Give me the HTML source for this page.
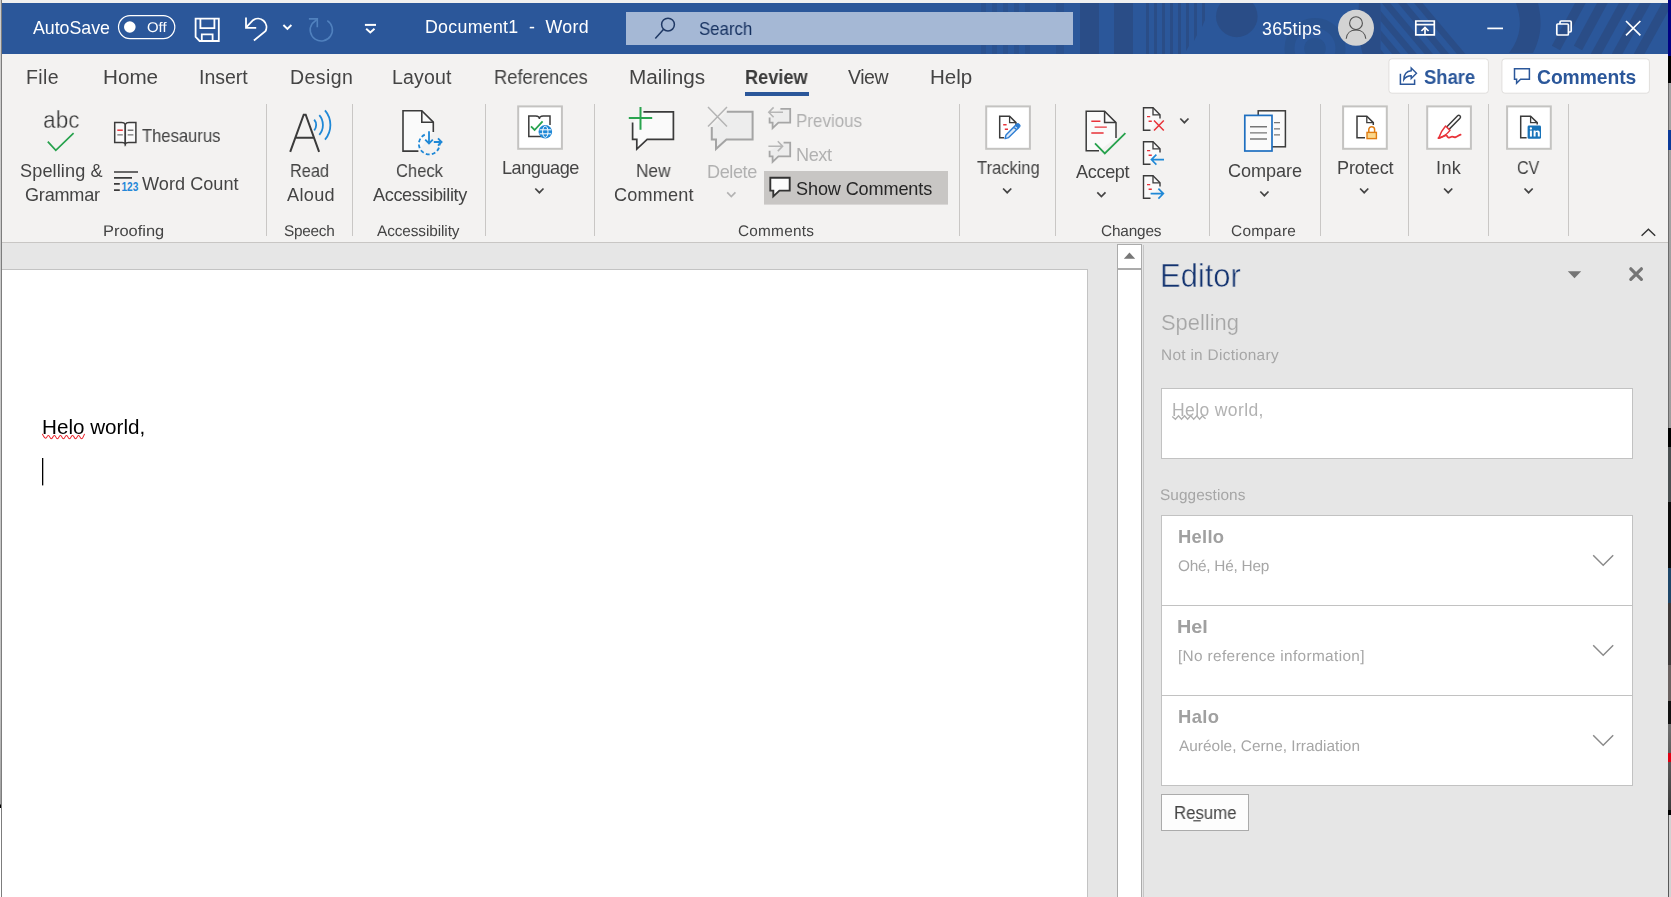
<!DOCTYPE html>
<html><head><meta charset="utf-8"><title>Document1 - Word</title><style>
html,body{margin:0;padding:0;width:1671px;height:897px;overflow:hidden;background:#f0f0f0;}
body{position:relative;font-family:"Liberation Sans",sans-serif;}
.a{position:absolute;}
.t{position:absolute;white-space:pre;line-height:40px;transform-origin:0 0;will-change:transform;font-family:"Liberation Sans",sans-serif;}
#ov{position:absolute;left:0;top:0;width:1671px;height:897px;}
</style></head>
<body>

<div class="a" style="left:0;top:0;width:1671px;height:3px;background:#f0f0f0"></div>
<div class="a" style="left:2px;top:3px;width:1666px;height:51px;background:#2b579a"></div>
<div class="a" style="left:2px;top:54px;width:1666px;height:188px;background:#f3f2f1"></div>
<div class="a" style="left:2px;top:242px;width:1666px;height:1px;background:#c8c6c4"></div>
<div class="a" style="left:2px;top:243px;width:1666px;height:654px;background:#e6e6e6"></div>
<!-- page -->
<div class="a" style="left:2px;top:269px;width:1085px;height:628px;background:#fff;border-top:1px solid #c3c3c3;border-right:1px solid #c3c3c3"></div>
<!-- scrollbar -->
<div class="a" style="left:1117px;top:244px;width:23px;height:653px;background:#fff;border:1px solid #ababab;border-bottom:none"></div>
<div class="a" style="left:1117px;top:268px;width:25px;height:2px;background:#ababab"></div>
<div class="a" style="left:1143px;top:245px;width:1px;height:652px;background:#c6c6c6"></div>
<!-- pane boxes -->
<div class="a" style="left:1161px;top:388px;width:470px;height:69px;background:#fff;border:1px solid #c2c2c2"></div>
<div class="a" style="left:1161px;top:515px;width:470px;height:269px;background:#fff;border:1px solid #c2c2c2"></div>
<div class="a" style="left:1162px;top:605px;width:470px;height:1px;background:#c2c2c2"></div>
<div class="a" style="left:1162px;top:695px;width:470px;height:1px;background:#c2c2c2"></div>
<div class="a" style="left:1161px;top:794px;width:86px;height:35px;background:#fdfdfd;border:1px solid #ababab"></div>
<!-- window edges -->
<div class="a" style="left:0;top:0;width:1px;height:897px;background:linear-gradient(to bottom,#cdcdcd 0,#c4c4c4 700px,#a0a0a0 804px,#000 805px,#000 808px,#fff 808px)"></div>
<div class="a" style="left:1px;top:0;width:1px;height:897px;background:#7d7d7d"></div>
<div class="a" style="left:1668px;top:0;width:3px;height:897px;background:linear-gradient(to bottom,#000082 0,#000082 56px,#000 56px,#000 83px,#a3a3a3 83px,#a3a3a3 130px,#0b3a99 130px,#0b3a99 150px,#a3a3a3 150px,#9c9c9c 428px,#000 428px,#000 447px,#4a4f50 447px,#4a4f50 502px,#0c0c0c 502px,#0c0c0c 568px,#1e4668 568px,#1e4668 603px,#3e3a3a 603px,#3e3a3a 665px,#6a6260 665px,#6a6260 701px,#111 701px,#111 724px,#707070 724px,#3c3c3c 810px,#000 810px,#000 815px,#d2d2d2 815px)"></div>
<div class="a" style="left:1668px;top:83px;width:1px;height:47px;background:#6c6c6c"></div>
<div class="a" style="left:1668px;top:150px;width:1px;height:278px;background:#6c6c6c"></div>
<div class="a" style="left:1668px;top:815px;width:1px;height:82px;background:#585858"></div>
<div class="a" style="left:1668px;top:753px;width:3px;height:9px;background:#e00012"></div>

<svg id="ov" width="1671" height="897" viewBox="0 0 1671 897">
<defs><clipPath id="tbclip"><rect x="2" y="3" width="1666" height="51"/></clipPath>
<clipPath id="tbclipR"><rect x="1380.5" y="3" width="120" height="51"/></clipPath></defs>

<!-- title bar decorations -->
<g fill="#2a4d87">
 <rect x="1080" y="3" width="19" height="51"/>
 <rect x="1114" y="3" width="19" height="51"/>
 <rect x="1146" y="3" width="3" height="51"/>
 <rect x="1154" y="3" width="3" height="51"/>
 <rect x="1162" y="3" width="3" height="51"/>
 <rect x="1170" y="3" width="3" height="51"/>
 <rect x="1178" y="3" width="3" height="51"/>
 <path d="M1186,3h3v43l-3,5z"/>
 <path d="M1194,3h3v32l-3,6z"/>
 <path d="M1202,3h3v17l-3,7z"/>
 <rect x="981" y="3" width="5" height="51" opacity=".55"/>
 <rect x="992" y="3" width="5" height="51" opacity=".55"/>
 <rect x="1003" y="3" width="5" height="51" opacity=".55"/>
 <rect x="1014" y="3" width="5" height="51" opacity=".55"/>
 <rect x="1025" y="3" width="5" height="51" opacity=".55"/>
 <rect x="1056" y="3" width="8" height="51" opacity=".55"/>
</g>
<g clip-path="url(#tbclip)">
 <circle cx="1236.8" cy="16.4" r="20.8" fill="#2a4d87"/>
 <circle cx="1315" cy="48.5" r="25.5" fill="none" stroke="#29528f" stroke-width="10"/>
 <circle cx="1315" cy="48.5" r="10.8" fill="#29528f"/>
 <path d="M1359,3C1357.6,20 1358.6,38 1362.6,54H1380.5V3Z" fill="#2a4d87"/>
 <g fill="#2a4d87" clip-path="url(#tbclipR)">
  <path d="M1333.1,3h8.4l43.7,52h-8.4z"/>
  <path d="M1349.3,3h8.4l43.7,52h-8.4z"/>
  <path d="M1365.5,3h8.4l43.7,52h-8.4z"/>
  <path d="M1381.7,3h8.4l43.7,52h-8.4z"/>
  <path d="M1397.9,3h8.4l43.7,52h-8.4z"/>
  <path d="M1414.1,3h8.4l43.7,52h-8.4z"/>
 </g>
 <path d="M1516,3 C1522,20 1522,36 1509,53 L1533,53 C1542,36 1542,20 1538,3 Z" fill="#2a4d87"/>
 <g stroke="#2a4d87" stroke-width="9.4" stroke-linecap="butt">
  <line x1="1582" y1="0" x2="1556" y2="48"/>
  <line x1="1604" y1="0" x2="1578" y2="48"/>
  <line x1="1626" y1="0" x2="1595" y2="56"/>
  <line x1="1647" y1="0" x2="1616" y2="56"/>
  <line x1="1669" y1="0" x2="1638" y2="56"/>
 </g>
</g>
<!-- search box -->
<rect x="626" y="12" width="447" height="33" fill="#a5b8d5"/>
<g fill="none" stroke="#1f3864" stroke-width="1.5">
 <circle cx="668" cy="24.6" r="6.4"/>
 <line x1="663.4" y1="29.4" x2="655.3" y2="38.5"/>
</g>
<!-- autosave toggle -->
<rect x="118.5" y="15.6" width="56.3" height="23" rx="11.5" fill="none" stroke="#fff" stroke-width="1.2"/>
<circle cx="129.8" cy="27" r="5.8" fill="#fff"/>
<g fill="none" stroke="#fff" stroke-width="1.8">
 <!-- save -->
 <path d="M195.6,18.7H218.8V41H199.6L195.6,37Z"/>
 <path d="M200.4,18.7V28.2H214.4V18.7"/>
 <path d="M201.8,41V34.3H212.6V41"/>
 <!-- undo -->
 <path d="M246,17.6V27.8H256.2"/>
 <path d="M246.4,27.2L253,20.2A8.5,8.5 0 0 1 265.4,31.2L253.9,40.5"/>
 <path d="M283.4,25L287.4,29L291.4,25" stroke-width="1.9"/>
 <!-- customize qat -->
 <path d="M364.9,24.9H376" stroke-width="2"/>
 <path d="M366.2,28.7L370.3,32.4L374.5,28.7" stroke-width="1.9"/>
</g>
<!-- redo (dim) -->
<g fill="none" stroke="#5081be" stroke-width="1.6">
 <path d="M327.3,20.6A11.1,11.1 0 1 1 312.2,23.6L317,19.4"/>
 <path d="M308.9,18.9H317.3V27.2"/>
</g>
<!-- avatar -->
<circle cx="1356" cy="27.8" r="18" fill="#d3d3d3"/>
<g fill="none" stroke="#505050" stroke-width="1.1">
 <circle cx="1356" cy="23.2" r="6.4"/>
 <path d="M1346.2,38.8C1346.6,33.2 1350.6,30 1356,30C1361.4,30 1365.4,33.2 1365.8,38.8"/>
</g>
<!-- window controls -->
<g fill="none" stroke="#fff" stroke-width="1.7">
 <path d="M1415.8,21H1434.3V34.8H1415.8Z"/>
 <path d="M1415.8,24.6H1434.3"/>
 <path d="M1425,34.8V28"/>
 <path d="M1421.4,31L1425,27.4L1428.6,31"/>
 <path d="M1487.3,28.4H1503"/>
 <rect x="1556.8" y="24" width="11.6" height="11" rx="1"/>
 <path d="M1560,24V22.2Q1560,21 1561.2,21H1570Q1571.2,21 1571.2,22.2V30.8Q1571.2,32 1570,32H1568.4"/>
 <path d="M1626,21L1640.4,35.3M1640.4,21L1626,35.3"/>
</g>
<!-- tab underline -->
<rect x="745" y="92" width="64" height="4" fill="#2b579a"/>
<!-- share / comments buttons -->
<rect x="1388.9" y="58.8" width="99.5" height="34.4" rx="3" fill="#fff" stroke="#e0dedc" stroke-width="1"/>
<rect x="1501.9" y="58.8" width="147.5" height="34.4" rx="3" fill="#fff" stroke="#e0dedc" stroke-width="1"/>
<g fill="none" stroke="#2b579a" stroke-width="1.5" stroke-linejoin="miter">
 <path d="M1400.4,73.8V84.3H1414.6V79.6"/>
 <path d="M1411.2,67.9L1416.5,73.2L1411.2,78.5V75.7C1408,75.7 1405.6,76.8 1403.8,79.6C1404,74.6 1406.6,71.2 1411.2,70.8Z" stroke-width="1.4"/>
 <path d="M1514.5,68.7H1529.4V79.3H1520.6L1516.6,83.2V79.3H1514.5Z"/>
</g>

<rect x="266" y="104" width="1" height="132" fill="#c9c7c5"/><rect x="352" y="104" width="1" height="132" fill="#c9c7c5"/><rect x="485" y="104" width="1" height="132" fill="#c9c7c5"/><rect x="594" y="104" width="1" height="132" fill="#c9c7c5"/><rect x="959" y="104" width="1" height="132" fill="#c9c7c5"/><rect x="1055" y="104" width="1" height="132" fill="#c9c7c5"/><rect x="1209" y="104" width="1" height="132" fill="#c9c7c5"/><rect x="1320" y="104" width="1" height="132" fill="#c9c7c5"/><rect x="1408" y="104" width="1" height="132" fill="#c9c7c5"/><rect x="1488" y="104" width="1" height="132" fill="#c9c7c5"/><rect x="1568" y="104" width="1" height="132" fill="#c9c7c5"/>
<!-- spelling check -->
<path d="M47.8,141.6L55.8,150.4L73.6,133.2" fill="none" stroke="#27a24d" stroke-width="1.7"/>
<!-- thesaurus -->
<g fill="#fafafa" stroke="#3b3b3b" stroke-width="1.5" stroke-linejoin="miter">
 <path d="M125.3,124.3Q124.2,122.5 121.6,122.5H114.7V142.4H122.2Q124.4,142.4 125.3,144Z"/>
 <path d="M125.3,124.3Q126.4,122.5 129,122.5H135.9V142.4H128.4Q126.2,142.4 125.3,144Z"/>
</g>
<path d="M117.3,130.2H122.8" stroke="#e8333a" stroke-width="1.5"/>
<path d="M117.3,134.9H122.8M127.7,130.2H133.4M127.7,134.9H133.4" stroke="#767676" stroke-width="1.4"/>
<!-- word count -->
<path d="M114,172H138M114,177.9H132M114,183.9H119.8M114,190.1H119.8" stroke="#3b3b3b" stroke-width="1.7"/>
<!-- read aloud -->
<path d="M290.2,151.9L303.7,114.7H305.7L319.1,151.9M296.2,137.7H313.4" fill="none" stroke="#3b3b3b" stroke-width="2" stroke-linejoin="miter"/>
<g fill="none" stroke="#1f88d6" stroke-width="1.8">
 <path d="M314.2,119.6A8.4,8.4 0 0 1 314.2,130.4"/>
 <path d="M319.3,115.2A15.1,15.1 0 0 1 319.3,134.8"/>
 <path d="M325,110.4A22.5,22.5 0 0 1 325,139.6"/>
</g>
<!-- check accessibility -->
<path d="M418.4,151.1H403V110.7H421.8L433.3,122.2V132" fill="#fafafa" stroke="#3b3b3b" stroke-width="1.6"/>
<path d="M421.8,110.7V122.2H433.3" fill="none" stroke="#3b3b3b" stroke-width="1.6"/>
<g fill="none" stroke="#1f88d6" stroke-width="1.8">
 <path d="M424.8,134.6A10.4,10.4 0 1 0 439.6,142.8" stroke-dasharray="3.8 2.3"/>
 <path d="M429,131.2V143M425.2,139.6L429,143.4L432.8,139.6"/>
 <path d="M433.8,142H441.2M438,138.4L441.6,142L438,145.6"/>
</g>
<!-- language -->
<rect x="518.2" y="106.4" width="43.7" height="42.4" fill="#fff" stroke="#c4c3c1" stroke-width="2"/>
<path d="M546,136.4H528.8V115.9H535.6Q539.4,115.9 539.4,119Q539.4,115.9 543.2,115.9H550V125" fill="none" stroke="#3b3b3b" stroke-width="1.5"/>
<path d="M531,126.4L534.6,130L542.6,121.4" fill="none" stroke="#27a24d" stroke-width="1.8"/>
<circle cx="545.3" cy="131.8" r="6.8" fill="#1f88d6"/>
<g fill="none" stroke="#fff" stroke-width="1">
 <ellipse cx="545.3" cy="131.8" rx="2.7" ry="5.6"/>
 <path d="M539.6,129.8H551M539.6,133.8H551"/>
</g>
<path d="M535.3,188.5L539.4,192.7L543.5,188.5" fill="none" stroke="#444" stroke-width="1.7"/>
<!-- new comment -->
<path d="M643.4,111.8H673.4V139.4H647.2L636.8,149V139.4H632.6V122.6" fill="#fafafa" stroke="#3b3b3b" stroke-width="1.7"/>
<path d="M640.5,107V129.8M628.8,118.1H652.2" stroke="#2aa44f" stroke-width="2"/>
<!-- delete (disabled) -->
<path d="M726.8,111.8H752.6V139.4H726.4L716,149V139.4H711.8V127" fill="#ededed" stroke="#a4a4a4" stroke-width="2"/>
<path d="M708,107L727,126.4M727,107L708,126.4" stroke="#b4b4b4" stroke-width="1.5"/>
<path d="M727.1999999999999,192.3L731.3,196.5L735.4,192.3" fill="none" stroke="#b3b3b3" stroke-width="1.7"/>
<!-- previous / next (disabled) -->
<g fill="#ededed" stroke="#a6a6a6" stroke-width="1.8">
 <path d="M780.4,108.8H790.2V122.6H778.4L772.6,128.2V122.6H769.6V117.6"/>
 <path d="M783.6,142.6H790.2V156.4H778.4L772.6,162V156.4H769.6V150.8"/>
</g>
<g fill="none" stroke="#b6b6b6" stroke-width="1.6">
 <path d="M783,112.3H768.8M773.6,107.4L768.8,112.3L773.6,117.2"/>
 <path d="M768.4,146.2H782.6M777.8,141.3L782.6,146.2L777.8,151.1"/>
</g>
<!-- show comments -->
<rect x="764" y="171" width="184" height="33.6" fill="#c8c6c4"/>
<path d="M770.3,177.8H789.7V190.6H779.4L773.3,196.4V190.6H770.3Z" fill="#fcfcfc" stroke="#333" stroke-width="1.9"/>
<!-- tracking -->
<rect x="986.2" y="106.4" width="43.7" height="42.4" fill="#fff" stroke="#c4c3c1" stroke-width="2"/>
<path d="M1004,137.8H999.7V116.2H1009.6L1016,122.6V126" fill="none" stroke="#3b3b3b" stroke-width="1.5"/>
<path d="M1009.6,116.2V122.6H1016" fill="none" stroke="#3b3b3b" stroke-width="1.3"/>
<path d="M1003.2,124.7H1006.6M1004.8,129.2H1008" stroke="#e8333a" stroke-width="1.4"/>
<path d="M1015.6,125.2L1018.4,128L1008.6,137.6L1005,138.6L1006,135Z M1013.8,127L1016.6,129.8" fill="#dbeaf9" stroke="#2b7cd3" stroke-width="1.4" stroke-linejoin="round"/>
<path d="M1015.6,125.2L1017,123.9Q1018,123.2 1018.9,124.1L1019.6,124.8Q1020.4,125.7 1019.7,126.6L1018.4,128" fill="#2b7cd3" stroke="#2b7cd3" stroke-width="1.2"/>
<path d="M1003.1,188.5L1007.2,192.7L1011.3000000000001,188.5" fill="none" stroke="#444" stroke-width="1.7"/>
<!-- accept -->
<path d="M1099,150.8H1086.2V111.2H1104.6L1116,122.6V138" fill="#fafafa" stroke="#3b3b3b" stroke-width="1.5"/>
<path d="M1104.6,111.2V122.6H1116" fill="none" stroke="#3b3b3b" stroke-width="1.5"/>
<path d="M1091.3,121.3H1100.4M1094.6,127.1H1106.8M1091.3,133H1103.6" stroke="#e8333a" stroke-width="1.4"/>
<path d="M1095,143.4L1104.8,153.4L1125.4,133.2" fill="none" stroke="#27a24d" stroke-width="1.8"/>
<path d="M1097.3000000000002,192.3L1101.4,196.5L1105.5,192.3" fill="none" stroke="#444" stroke-width="1.7"/>
<path d="M1150.5,130.3H1143.5V107.8H1153L1160,114.8V118.5" fill="#fafafa" stroke="#3b3b3b" stroke-width="1.4"/>
<path d="M1153,107.8V114.8H1160" fill="none" stroke="#3b3b3b" stroke-width="1.3"/>
<path d="M1147,116.6H1150.2M1148.6,121.2H1151.8" stroke="#e8333a" stroke-width="1.4"/><path d="M1154,120.6L1163.8,130.6M1163.8,120.6L1154,130.6" stroke="#e8333a" stroke-width="1.5"/><path d="M1180.3000000000002,118.5L1184.4,122.69999999999999L1188.5,118.5" fill="none" stroke="#444" stroke-width="1.7"/><path d="M1150.5,164.3H1143.5V141.8H1153L1160,148.8V152.5" fill="#fafafa" stroke="#3b3b3b" stroke-width="1.4"/>
<path d="M1153,141.8V148.8H1160" fill="none" stroke="#3b3b3b" stroke-width="1.3"/>
<path d="M1147,150.6H1150.2M1148.6,155.2H1151.8" stroke="#e8333a" stroke-width="1.4"/><path d="M1164,159.6H1151.4M1156.4,154.6L1151.4,159.6L1156.4,164.6" fill="none" stroke="#1f88d6" stroke-width="1.6"/><path d="M1150.5,198.3H1143.5V175.8H1153L1160,182.8V186.5" fill="#fafafa" stroke="#3b3b3b" stroke-width="1.4"/>
<path d="M1153,175.8V182.8H1160" fill="none" stroke="#3b3b3b" stroke-width="1.3"/>
<path d="M1147,184.6H1150.2M1148.6,189.2H1151.8" stroke="#e8333a" stroke-width="1.4"/><path d="M1150.6,193.6H1163.4M1158.4,188.6L1163.4,193.6L1158.4,198.6" fill="none" stroke="#1f88d6" stroke-width="1.6"/>
<!-- compare -->
<rect x="1258.2" y="110.8" width="27.2" height="36" fill="#fafafa" stroke="#3b3b3b" stroke-width="1.5"/>
<path d="M1274,122.6H1280M1274,128.8H1280M1274,134.9H1280" stroke="#767676" stroke-width="1.3"/>
<rect x="1244.8" y="115.4" width="27.2" height="35.6" fill="#fafafa" stroke="#1e6fc0" stroke-width="1.7"/>
<path d="M1250,126.8H1267M1250,132.9H1267M1250,139H1267" stroke="#767676" stroke-width="1.4"/>
<path d="M1260.3000000000002,191.5L1264.4,195.7L1268.5,191.5" fill="none" stroke="#444" stroke-width="1.7"/>
<!-- protect -->
<rect x="1343.1" y="106.4" width="43.7" height="42.4" fill="#fff" stroke="#c4c3c1" stroke-width="2"/>
<path d="M1365,137.8H1357V116.2H1366.8L1373.3,122.6V125" fill="none" stroke="#3b3b3b" stroke-width="1.5"/>
<path d="M1366.8,116.2V122.6H1373.3" fill="none" stroke="#3b3b3b" stroke-width="1.3"/>
<rect x="1367" y="132.4" width="9.4" height="6.2" fill="#fbd78c" stroke="#e07c12" stroke-width="1.4"/>
<path d="M1368.8,132.4V129.6A2.9,2.9 0 0 1 1374.6,129.6V132.4" fill="none" stroke="#e07c12" stroke-width="1.5"/>
<path d="M1360.1000000000001,188.5L1364.2,192.7L1368.3,188.5" fill="none" stroke="#444" stroke-width="1.7"/>
<!-- ink -->
<rect x="1427.2" y="106.4" width="43.7" height="42.4" fill="#fff" stroke="#c4c3c1" stroke-width="2"/>
<path d="M1448.8,127.2L1458.8,117" stroke="#3b3b3b" stroke-width="4.8" stroke-linecap="round"/>
<path d="M1447.6,128.4L1458.8,117" stroke="#fff" stroke-width="1.9" stroke-linecap="round"/>
<path d="M1445.6,126L1450,130.4C1447,134.4 1443.4,136.8 1438.6,138.2C1440,133.6 1442.2,129.8 1445.6,126Z" fill="#fff" stroke="#e8333a" stroke-width="1.5" stroke-linejoin="round"/>
<path d="M1438.4,138.1C1442,137.7 1445.6,134.4 1446.8,135.7C1447.6,137 1448.6,138.5 1450.8,137.1C1452.6,135.7 1453.6,137.9 1455.6,137.1C1457.4,136.3 1459,135.3 1460.6,134.7" fill="none" stroke="#e8333a" stroke-width="1.8" stroke-linecap="round"/>
<path d="M1444.1000000000001,188.5L1448.2,192.7L1452.3,188.5" fill="none" stroke="#444" stroke-width="1.7"/>
<!-- cv -->
<rect x="1507.1" y="106.4" width="43.7" height="42.4" fill="#fff" stroke="#c4c3c1" stroke-width="2"/>
<path d="M1526.6,137.8H1520.7V116.2H1530.6L1537.2,122.6V124.6" fill="none" stroke="#3b3b3b" stroke-width="1.5"/>
<path d="M1530.6,116.2V122.6H1537.2" fill="none" stroke="#3b3b3b" stroke-width="1.3"/>
<rect x="1527.6" y="125.6" width="13.4" height="13.2" rx="1.4" fill="#1873b9"/>
<g fill="#fff"><rect x="1529.9" y="130.6" width="2" height="6"/><circle cx="1530.9" cy="128.5" r="1.15"/>
<path d="M1533.6,130.6h1.9v1c.5-.8 1.3-1.2 2.2-1.2 1.6 0 2.1 1 2.1 2.6v3.6h-2v-3.3c0-.8-.3-1.2-.9-1.2-.7 0-1.3.5-1.3 1.4v3.1h-2z"/></g>
<path d="M1524.5,188.5L1528.6,192.7L1532.6999999999998,188.5" fill="none" stroke="#444" stroke-width="1.7"/>
<!-- collapse ribbon -->
<path d="M1641.6,235.8L1648.4,229.2L1655.2,235.8" fill="none" stroke="#333" stroke-width="1.4"/>


<!-- scrollbar arrow -->
<path d="M1123.8,258.8L1129.5,252.6L1135.2,258.8Z" fill="#777"/>
<!-- doc squiggle + caret -->
<path d="M42.3,433.9Q45.32,440.3 46.83,437.10Q48.34,433.9 49.85,437.10Q51.36,440.3 52.88,437.10Q54.39,433.9 55.90,437.10Q57.41,440.3 58.92,437.10Q60.43,433.9 61.94,437.10Q63.45,440.3 64.96,437.10Q66.47,433.9 67.98,437.10Q69.49,440.3 71.00,437.10Q72.51,433.9 74.03,437.10Q75.54,440.3 77.05,437.10Q78.56,433.9 80.07,437.10Q81.58,440.3 83.09,437.10L84.6,433.9" fill="none" stroke="#ea1f27" stroke-width="1.05"/>
<rect x="42" y="458" width="1.3" height="27.4" fill="#000"/>
<!-- pane header controls -->
<path d="M1567.8,271.2H1581.2L1574.5,278.2Z" fill="#757575"/>
<path d="M1630.8,268.8L1641.4,279.4M1641.4,268.8L1630.8,279.4" stroke="#757575" stroke-width="3.2" stroke-linecap="round"/>
<!-- pane squiggle -->
<path d="M1172.2,416.4L1175.4,419.2L1178.5,415.8L1181.5,419.2L1184.6,415.8L1187.6,419.2L1190.7,415.8L1193.7,419.2L1196.8,415.8L1199.6,419.2L1202.4,416.0L1205.6,418.8" fill="none" stroke="#b0b0b0" stroke-width="1.35" stroke-linejoin="miter"/>
<path d="M1593.2,555.2L1603.2,565.2L1613.2,555.2" fill="none" stroke="#8a8a8a" stroke-width="1.5"/>
<path d="M1593.2,645.2L1603.2,655.2L1613.2,645.2" fill="none" stroke="#8a8a8a" stroke-width="1.5"/>
<path d="M1593.2,735.2L1603.2,745.2L1613.2,735.2" fill="none" stroke="#8a8a8a" stroke-width="1.5"/>
<!-- resume underline -->
<rect x="1193.3" y="820.2" width="7.4" height="1.2" fill="#444"/>

<text x="121.4" y="190.7" font-family="Liberation Sans, sans-serif" font-weight="700" font-size="12.4" fill="#2488d8" textLength="16.9" lengthAdjust="spacingAndGlyphs">123</text>
</svg>
<span class="t" style="left:33.2px;top:8px;font-size:17.8px;letter-spacing:-0.029px;color:#ffffff;font-weight:400">AutoSave</span><span class="t" style="left:146.5px;top:7px;font-size:13.97px;letter-spacing:0.000px;color:#ffffff;font-weight:400;text-rendering:geometricPrecision;transform:scaleX(1.0647)">Off</span><span class="t" style="left:424.8px;top:7px;font-size:17.8px;letter-spacing:0.282px;color:#ffffff;font-weight:400">Document1  -  Word</span><span class="t" style="left:698.5px;top:9px;font-size:17.8px;letter-spacing:0.000px;color:#15305f;font-weight:400;transform:scaleX(0.9444)">Search</span><span class="t" style="left:1262.4px;top:9px;font-size:17.8px;letter-spacing:0.300px;color:#ffffff;font-weight:400">365tips</span><span class="t" style="left:25.8px;top:57px;font-size:19.5px;letter-spacing:0.400px;color:#444444;font-weight:400">File</span><span class="t" style="left:102.8px;top:57px;font-size:19.5px;letter-spacing:0.000px;color:#444444;font-weight:400;transform:scaleX(1.0592)">Home</span><span class="t" style="left:198.6px;top:57px;font-size:19.5px;letter-spacing:-0.040px;color:#444444;font-weight:400">Insert</span><span class="t" style="left:289.8px;top:57px;font-size:19.5px;letter-spacing:0.420px;color:#444444;font-weight:400">Design</span><span class="t" style="left:391.6px;top:57px;font-size:19.5px;letter-spacing:0.160px;color:#444444;font-weight:400">Layout</span><span class="t" style="left:494.0px;top:57px;font-size:19.5px;letter-spacing:0.000px;color:#444444;font-weight:400;transform:scaleX(0.9402)">References</span><span class="t" style="left:629.4px;top:57px;font-size:19.5px;letter-spacing:0.000px;color:#444444;font-weight:400;transform:scaleX(1.0638)">Mailings</span><span class="t" style="left:745.0px;top:57px;font-size:19.5px;letter-spacing:0.000px;color:#3b3b3b;font-weight:700;transform:scaleX(0.9318)">Review</span><span class="t" style="left:848.4px;top:57px;font-size:19.5px;letter-spacing:-0.433px;color:#444444;font-weight:400">View</span><span class="t" style="left:929.7px;top:57px;font-size:19.5px;letter-spacing:0.000px;color:#444444;font-weight:400;transform:scaleX(1.0541)">Help</span><span class="t" style="left:1423.5px;top:58px;font-size:19.3px;letter-spacing:0.000px;color:#2b579a;font-weight:700;transform:scaleX(0.9558)">Share</span><span class="t" style="left:1536.6px;top:58px;font-size:19.3px;letter-spacing:-0.043px;color:#2b579a;font-weight:700">Comments</span><span class="t" style="left:43.0px;top:100px;font-size:24.6px;letter-spacing:0.000px;color:#333333;font-weight:400;-webkit-text-stroke:0.35px #f3f2f1;transform:scaleX(0.9243)">abc</span><span class="t" style="left:20.4px;top:151px;font-size:18.1px;letter-spacing:0.122px;color:#444444;font-weight:400">Spelling &amp;</span><span class="t" style="left:24.5px;top:175px;font-size:18.1px;letter-spacing:-0.217px;color:#444444;font-weight:400">Grammar</span><span class="t" style="left:142.4px;top:116px;font-size:18.1px;letter-spacing:0.000px;color:#444444;font-weight:400;transform:scaleX(0.9165)">Thesaurus</span><span class="t" style="left:142.4px;top:164px;font-size:18.1px;letter-spacing:0.044px;color:#444444;font-weight:400">Word Count</span><span class="t" style="left:102.5px;top:212px;font-size:15.36px;letter-spacing:0.000px;color:#444444;font-weight:400;text-rendering:geometricPrecision;transform:scaleX(1.0709)">Proofing</span><span class="t" style="left:290.1px;top:151px;font-size:18.1px;letter-spacing:0.000px;color:#444444;font-weight:400;transform:scaleX(0.9000)">Read</span><span class="t" style="left:286.5px;top:175px;font-size:18.1px;letter-spacing:0.350px;color:#444444;font-weight:400">Aloud</span><span class="t" style="left:283.6px;top:212px;font-size:15.36px;letter-spacing:-0.280px;color:#444444;font-weight:400;text-rendering:geometricPrecision">Speech</span><span class="t" style="left:395.7px;top:151px;font-size:18.1px;letter-spacing:0.000px;color:#444444;font-weight:400;transform:scaleX(0.9140)">Check</span><span class="t" style="left:372.6px;top:175px;font-size:18.1px;letter-spacing:-0.350px;color:#444444;font-weight:400">Accessibility</span><span class="t" style="left:376.5px;top:212px;font-size:15.36px;letter-spacing:-0.092px;color:#444444;font-weight:400;text-rendering:geometricPrecision">Accessibility</span><span class="t" style="left:502.0px;top:148px;font-size:18.1px;letter-spacing:-0.443px;color:#444444;font-weight:400">Language</span><span class="t" style="left:636.2px;top:151px;font-size:18.1px;letter-spacing:0.000px;color:#444444;font-weight:400;transform:scaleX(0.9514)">New</span><span class="t" style="left:613.6px;top:175px;font-size:18.1px;letter-spacing:0.200px;color:#444444;font-weight:400">Comment</span><span class="t" style="left:707.0px;top:152px;font-size:18.1px;letter-spacing:-0.400px;color:#b1b1b1;font-weight:400">Delete</span><span class="t" style="left:796.3px;top:101px;font-size:18.1px;letter-spacing:0.000px;color:#b1b1b1;font-weight:400;transform:scaleX(0.9391)">Previous</span><span class="t" style="left:796.2px;top:135px;font-size:18.1px;letter-spacing:-0.433px;color:#b1b1b1;font-weight:400">Next</span><span class="t" style="left:795.7px;top:169px;font-size:18.1px;letter-spacing:-0.125px;color:#262626;font-weight:400">Show Comments</span><span class="t" style="left:737.5px;top:212px;font-size:15.36px;letter-spacing:0.229px;color:#444444;font-weight:400;text-rendering:geometricPrecision">Comments</span><span class="t" style="left:976.5px;top:148px;font-size:18.1px;letter-spacing:0.000px;color:#444444;font-weight:400;transform:scaleX(0.9118)">Tracking</span><span class="t" style="left:1075.7px;top:152px;font-size:18.1px;letter-spacing:-0.340px;color:#444444;font-weight:400">Accept</span><span class="t" style="left:1101.1px;top:212px;font-size:15.36px;letter-spacing:-0.167px;color:#444444;font-weight:400;text-rendering:geometricPrecision">Changes</span><span class="t" style="left:1228.3px;top:151px;font-size:18.1px;letter-spacing:-0.067px;color:#444444;font-weight:400">Compare</span><span class="t" style="left:1231.3px;top:212px;font-size:15.36px;letter-spacing:0.283px;color:#444444;font-weight:400;text-rendering:geometricPrecision">Compare</span><span class="t" style="left:1336.7px;top:148px;font-size:18.1px;letter-spacing:-0.117px;color:#444444;font-weight:400">Protect</span><span class="t" style="left:1435.9px;top:148px;font-size:18.1px;letter-spacing:0.350px;color:#444444;font-weight:400">Ink</span><span class="t" style="left:1517.4px;top:148px;font-size:18.1px;letter-spacing:0.000px;color:#444444;font-weight:400;transform:scaleX(0.8875)">CV</span><span class="t" style="left:42.4px;top:408px;font-size:19.3px;letter-spacing:0.000px;color:#000000;font-weight:400;transform:scaleX(1.0702)">Helo world,</span><span class="t" style="left:1159.8px;top:255px;font-size:33.7px;letter-spacing:0.000px;color:#12326f;font-weight:400;-webkit-text-stroke:0.6px #e6e6e6;transform:scaleX(0.9179)">Editor</span><span class="t" style="left:1161.2px;top:303px;font-size:21.9px;letter-spacing:0.000px;color:#a6a6a6;font-weight:400;-webkit-text-stroke:0.2px #e6e6e6">Spelling</span><span class="t" style="left:1160.8px;top:336px;font-size:15.36px;letter-spacing:0.306px;color:#a6a6a6;font-weight:400;text-rendering:geometricPrecision">Not in Dictionary</span><span class="t" style="left:1172.1px;top:390px;font-size:17.5px;letter-spacing:0.390px;color:#b2b2b2;font-weight:400">Helo world,</span><span class="t" style="left:1160.4px;top:476px;font-size:15.36px;letter-spacing:0.080px;color:#a6a6a6;font-weight:400;text-rendering:geometricPrecision">Suggestions</span><span class="t" style="left:1177.5px;top:517px;font-size:18.4px;letter-spacing:0.275px;color:#a0a0a0;font-weight:700">Hello</span><span class="t" style="left:1177.5px;top:547px;font-size:15.36px;letter-spacing:-0.245px;color:#a6a6a6;font-weight:400;text-rendering:geometricPrecision">Ohé, Hé, Hep</span><span class="t" style="left:1177.4px;top:607px;font-size:18.4px;letter-spacing:0.000px;color:#a0a0a0;font-weight:700;transform:scaleX(1.0769)">Hel</span><span class="t" style="left:1177.5px;top:637px;font-size:15.36px;letter-spacing:0.356px;color:#a6a6a6;font-weight:400;text-rendering:geometricPrecision">[No reference information]</span><span class="t" style="left:1177.5px;top:697px;font-size:18.4px;letter-spacing:0.367px;color:#a0a0a0;font-weight:700">Halo</span><span class="t" style="left:1178.5px;top:727px;font-size:15.36px;letter-spacing:0.031px;color:#a6a6a6;font-weight:400;text-rendering:geometricPrecision">Auréole, Cerne, Irradiation</span><span class="t" style="left:1173.9px;top:793px;font-size:17.6px;letter-spacing:0.000px;color:#444444;font-weight:400;transform:scaleX(0.9547)">Resume</span>
</body></html>
